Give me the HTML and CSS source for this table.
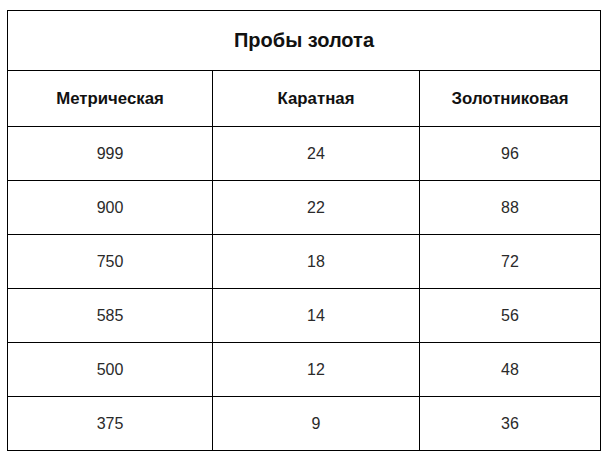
FILE: index.html
```html
<!DOCTYPE html>
<html lang="ru">
<head>
<meta charset="utf-8">
<title>Пробы золота</title>
<link rel="stylesheet" href="styles.css">
</head>
<body>
<table class="gold">
  <colgroup>
    <col class="c1">
    <col class="c2">
    <col class="c3">
  </colgroup>
  <thead>
    <tr class="title-row"><th colspan="3">Пробы золота</th></tr>
    <tr class="head-row"><th>Метрическая</th><th>Каратная</th><th>Золотниковая</th></tr>
  </thead>
  <tbody>
    <tr><td>999</td><td>24</td><td>96</td></tr>
    <tr><td>900</td><td>22</td><td>88</td></tr>
    <tr><td>750</td><td>18</td><td>72</td></tr>
    <tr><td>585</td><td>14</td><td>56</td></tr>
    <tr><td>500</td><td>12</td><td>48</td></tr>
    <tr><td>375</td><td>9</td><td>36</td></tr>
  </tbody>
</table>
</body>
</html>
```
FILE: styles.css
```css
html, body {
  margin: 0;
  padding: 0;
  background: #fff;
}
body {
  padding: 10px 0 0 7px;
  font-family: "Liberation Sans", Arial, sans-serif;
}
.gold {
  border-collapse: collapse;
  table-layout: fixed;
  width: 593px;
}
.c1 { width: 205px; }
.c2 { width: 207px; }
.c3 { width: 181px; }
.gold th, .gold td {
  border: 1px solid #000;
  text-align: center;
  vertical-align: middle;
  padding: 0;
}
.title-row th {
  height: 59px;
  font-size: 20px;
  font-weight: bold;
  color: #111;
}
.head-row th {
  height: 55px;
  font-size: 16.8px;
  font-weight: bold;
  color: #111;
}
.gold td {
  height: 53px;
  font-size: 16px;
  color: #2a2a2a;
}
```
